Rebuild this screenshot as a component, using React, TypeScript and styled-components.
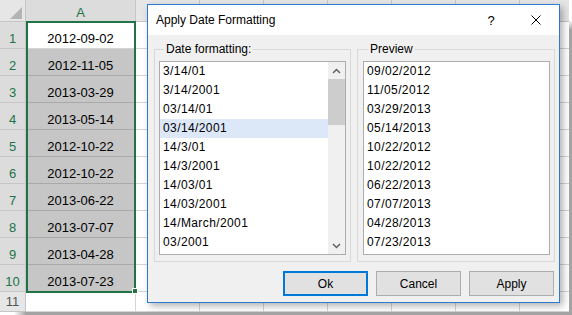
import React from 'react';
import styled, { createGlobalStyle } from 'styled-components';

const Global = createGlobalStyle`
  html, body { margin: 0; padding: 0; background: #ffffff; overflow: hidden; }
  body { font-family: "Liberation Sans", Arial, sans-serif; }
  #root { width: 572px; height: 315px; }
`;

const Screen = styled.div`
  width: 572px;
  height: 315px;
  display: grid;
  grid-template-columns: 569px 3px;
  grid-template-rows: 312px 3px;
  overflow: hidden;
`;

const RightShade = styled.div`
  background: linear-gradient(to bottom, #ffffff 0px, #ffffff 20px, #a3a3a3 30px, #a3a3a3 100%);
`;
const BottomShade = styled.div`
  background: linear-gradient(to right, #ffffff 0px, #ffffff 14px, #a3a3a3 26px, #a3a3a3 100%);
`;
const CornerShade = styled.div`
  background: #a3a3a3;
`;

const Sheet = styled.div`
  position: relative;
  overflow: hidden;
  background: #ffffff;
  display: flex;
  flex-direction: column;
`;

const SheetRow = styled.div<{ $h: number }>`
  display: grid;
  grid-template-columns: 26px 110px repeat(8, 64px);
  height: ${p => p.$h}px;
  flex: none;
`;

const Corner = styled.div`
  box-sizing: border-box;
  background: #e6e6e6;
  border-right: 1px solid #c6c6c6;
  border-bottom: 1px solid #c6c6c6;
  display: flex;
  align-items: flex-end;
  justify-content: flex-end;
  padding: 0 3px 2px 0;
`;

const ColHead = styled.div<{ $sel?: boolean }>`
  box-sizing: border-box;
  background: ${p => (p.$sel ? '#dcdcdc' : '#e6e6e6')};
  border-right: 1px solid #c6c6c6;
  border-bottom: 1px solid ${p => (p.$sel ? '#217346' : '#c6c6c6')};
  color: ${p => (p.$sel ? '#217346' : '#444444')};
  font-size: 13px;
  display: flex;
  align-items: center;
  justify-content: center;
  padding-top: 3px;
`;

const RowHead = styled.div<{ $sel?: boolean }>`
  box-sizing: border-box;
  background: ${p => (p.$sel ? '#dcdcdc' : '#e6e6e6')};
  border-right: 1px solid #c6c6c6;
  border-bottom: 1px solid #c6c6c6;
  color: ${p => (p.$sel ? '#217346' : '#555555')};
  font-size: 13px;
  line-height: 15px;
  display: flex;
  align-items: flex-end;
  justify-content: center;
  padding-bottom: 2px;
`;

const Cell = styled.div<{ $shade?: boolean }>`
  box-sizing: border-box;
  background: ${p => (p.$shade ? '#c6c6c6' : '#ffffff')};
  border-right: 1px solid #d4d4d4;
  border-bottom: 1px solid ${p => (p.$shade ? '#a9a9a9' : '#d4d4d4')};
  color: #000000;
  font-size: 13px;
  line-height: 15px;
  display: flex;
  align-items: flex-end;
  justify-content: center;
  padding-bottom: 2px;
`;

const Selection = styled.div`
  position: absolute;
  left: 26px;
  top: 21px;
  width: 110px;
  height: 272px;
  box-sizing: border-box;
  border: 2px solid #217346;
  pointer-events: none;
`;

const FillHandle = styled.div`
  position: absolute;
  left: 132px;
  top: 288px;
  width: 6px;
  height: 6px;
  box-sizing: border-box;
  background: #217346;
  border: 1px solid #ffffff;
`;

/* Dialog */
const Dialog = styled.div`
  position: absolute;
  left: 147px;
  top: 4px;
  width: 413px;
  height: 299px;
  box-sizing: border-box;
  border: 1px solid #2b7bd3;
  background: #f0f0f0;
  box-shadow: 3px 3px 7px rgba(0, 0, 0, 0.3);
  display: flex;
  flex-direction: column;
  font-size: 12px;
  color: #000000;
`;

const TitleBar = styled.div`
  height: 30px;
  flex: none;
  background: #ffffff;
  display: flex;
  align-items: center;
  padding-left: 8px;
`;

const TitleText = styled.div`
  flex: 1;
  font-size: 12px;
`;

const TitleButton = styled.div<{ $w: number }>`
  width: ${p => p.$w}px;
  height: 30px;
  display: flex;
  align-items: center;
  justify-content: center;
  font-size: 13px;
`;

const Body = styled.div`
  flex: 1;
  display: flex;
  flex-direction: column;
  padding: 7px 4px 6px 6px;
`;

const Groups = styled.div`
  display: flex;
  gap: 6px;
`;

const Group = styled.fieldset<{ $w: number; $pl: number }>`
  margin: 0;
  width: ${p => p.$w}px;
  box-sizing: border-box;
  border: 1px solid #d9d9d9;
  padding: 5px 4px 6px ${p => p.$pl}px;
`;

const Legend = styled.legend`
  font-size: 12px;
  line-height: 14px;
  padding: 0 2px;
  margin-left: 5px;
`;

const ListBox = styled.div`
  width: 187px;
  height: 194px;
  box-sizing: border-box;
  border: 1px solid #adadad;
  background: #ffffff;
  display: flex;
`;

const Items = styled.div`
  flex: 1;
  display: flex;
  flex-direction: column;
`;

const Item = styled.div<{ $sel?: boolean }>`
  height: 19px;
  line-height: 19px;
  padding-left: 3px;
  font-size: 12px;
  letter-spacing: 0.4px;
  background: ${p => (p.$sel ? '#dce7f8' : 'transparent')};
  white-space: nowrap;
`;

const ScrollBar = styled.div`
  width: 17px;
  background: #f0f0f0;
  display: flex;
  flex-direction: column;
`;

const ScrollArrow = styled.div`
  height: 17px;
  display: flex;
  align-items: center;
  justify-content: center;
`;

const Track = styled.div`
  flex: 1;
`;

const Thumb = styled.div`
  height: 46px;
  background: #cdcdcd;
`;

const ButtonRow = styled.div`
  display: flex;
  justify-content: flex-end;
  gap: 8px;
  margin-top: 9px;
  padding-right: 1px;
`;

const Button = styled.div<{ $def?: boolean }>`
  width: 85px;
  height: 25px;
  box-sizing: border-box;
  background: #e1e1e1;
  border: ${p => (p.$def ? '2px solid #0078d7' : '1px solid #adadad')};
  display: flex;
  align-items: center;
  justify-content: center;
  font-size: 12px;
`;

const Chevron = ({ up }: { up?: boolean }) => (
  <svg width="9" height="6" viewBox="0 0 9 6">
    <path
      d={up ? 'M1 5 L4.5 1.5 L8 5' : 'M1 1 L4.5 4.5 L8 1'}
      fill="none"
      stroke="#606060"
      strokeWidth="1.5"
    />
  </svg>
);

const dates = [
  '2012-09-02',
  '2012-11-05',
  '2013-03-29',
  '2013-05-14',
  '2012-10-22',
  '2012-10-22',
  '2013-06-22',
  '2013-07-07',
  '2013-04-28',
  '2013-07-23',
];

const formats = [
  '3/14/01',
  '3/14/2001',
  '03/14/01',
  '03/14/2001',
  '14/3/01',
  '14/3/2001',
  '14/03/01',
  '14/03/2001',
  '14/March/2001',
  '03/2001',
];

const previews = [
  '09/02/2012',
  '11/05/2012',
  '03/29/2013',
  '05/14/2013',
  '10/22/2012',
  '10/22/2012',
  '06/22/2013',
  '07/07/2013',
  '04/28/2013',
  '07/23/2013',
];

const otherCols = 8;

export default function App() {
  return (
    <>
      <Global />
      <Screen>
        <Sheet>
          <SheetRow $h={22}>
            <Corner>
              <svg width="12" height="12" viewBox="0 0 12 12">
                <polygon points="0,12 12,12 12,0" fill="#b4b4b4" />
              </svg>
            </Corner>
            <ColHead $sel>A</ColHead>
            {Array.from({ length: otherCols }).map((_, i) => (
              <ColHead key={i} />
            ))}
          </SheetRow>
          {dates.map((d, r) => (
            <SheetRow $h={27} key={d + r}>
              <RowHead $sel>{r + 1}</RowHead>
              <Cell $shade={r > 0}>{d}</Cell>
              {Array.from({ length: otherCols }).map((_, i) => (
                <Cell key={i} />
              ))}
            </SheetRow>
          ))}
          <SheetRow $h={20}>
            <RowHead>11</RowHead>
            <Cell />
            {Array.from({ length: otherCols }).map((_, i) => (
              <Cell key={i} />
            ))}
          </SheetRow>

          <Selection />
          <FillHandle />

          <Dialog>
            <TitleBar>
              <TitleText>Apply Date Formatting</TitleText>
              <TitleButton $w={44}>?</TitleButton>
              <TitleButton $w={46}>
                <svg width="10" height="10" viewBox="0 0 10 10">
                  <path d="M0.5 0.5 L9.5 9.5 M9.5 0.5 L0.5 9.5" stroke="#000" strokeWidth="1" />
                </svg>
              </TitleButton>
            </TitleBar>
            <Body>
              <Groups>
                <Group $w={197} $pl={4}>
                  <Legend>Date formatting:</Legend>
                  <ListBox>
                    <Items>
                      {formats.map((f, i) => (
                        <Item key={f} $sel={i === 3}>
                          {f}
                        </Item>
                      ))}
                    </Items>
                    <ScrollBar>
                      <ScrollArrow>
                        <Chevron up />
                      </ScrollArrow>
                      <Track>
                        <Thumb />
                      </Track>
                      <ScrollArrow>
                        <Chevron />
                      </ScrollArrow>
                    </ScrollBar>
                  </ListBox>
                </Group>
                <Group $w={198} $pl={5}>
                  <Legend>Preview</Legend>
                  <ListBox>
                    <Items>
                      {previews.map((p, i) => (
                        <Item key={p + i}>{p}</Item>
                      ))}
                    </Items>
                  </ListBox>
                </Group>
              </Groups>
              <ButtonRow>
                <Button $def>Ok</Button>
                <Button>Cancel</Button>
                <Button>Apply</Button>
              </ButtonRow>
            </Body>
          </Dialog>
        </Sheet>
        <RightShade />
        <BottomShade />
        <CornerShade />
      </Screen>
    </>
  );
}
